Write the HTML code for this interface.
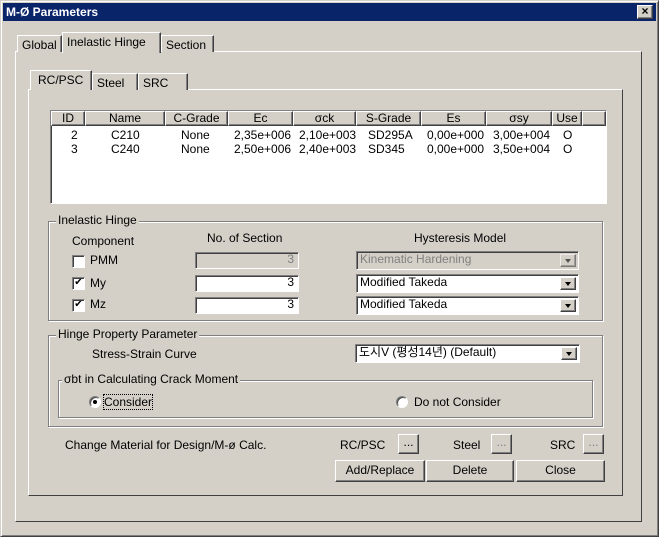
<!DOCTYPE html><html><head><meta charset="utf-8"><style>
*{box-sizing:border-box;margin:0;padding:0}
body{width:659px;height:537px;background:#d4d0c8;font:12px "Liberation Sans","Noto Sans CJK KR",sans-serif;color:#000;position:relative;overflow:hidden}
.a{position:absolute;white-space:nowrap}
.win{left:0;top:0;width:659px;height:537px;border:1px solid;border-color:#d4d0c8 #404040 #404040 #d4d0c8;box-shadow:inset 1px 1px #fff,inset -1px -1px #808080}
.title{left:3px;top:3px;width:653px;height:18px;background:#0a246a;color:#fff;font-weight:bold;font-size:12px;padding:2px 3px}
.raised{border:1px solid;border-color:#fff #404040 #404040 #fff;box-shadow:inset -1px -1px #808080}
.sunk{border:1px solid;border-color:#808080 #fff #fff #808080;box-shadow:inset 1px 1px #404040}
.tab{border:1px solid;border-color:#fff #404040 transparent #fff;border-bottom:none;box-shadow:inset -1px 0 #808080;padding:2px 4px;background:#d4d0c8}
.grp{border:1px solid #808080;box-shadow:1px 1px #fff,inset 1px 1px #fff}
.lg{background:#d4d0c8;padding:0 2px}
.th{top:0;height:15px;text-align:center;border:1px solid;border-color:#fff #404040 #404040 #fff;box-shadow:inset -1px -1px #808080;line-height:13px;background:#d4d0c8}
.cb{width:13px;height:13px;background:#fff}
.inp{background:#fff;text-align:right;padding:0 4px;line-height:13px}
.cmb{background:#fff;padding:0 3px;line-height:14px}
.arr{position:absolute;right:2px;top:2px;width:16px;height:13px;background:#d4d0c8;border:1px solid;border-color:#fff #404040 #404040 #fff;box-shadow:inset -1px -1px #808080}
.arr:after{content:"";position:absolute;left:4px;top:4px;border:3px solid transparent;border-top:4px solid #000;border-bottom:none}
.btn{text-align:center;line-height:18px;background:#d4d0c8}
</style></head><body>
<div class="a win"></div>
<div class="a title">M-Ø Parameters</div>
<div class="a raised" style="left:637px;top:5px;width:16px;height:14px;background:#d4d0c8;font-size:12px;line-height:11px;text-align:center;font-weight:bold">×</div>

<div class="a raised" style="left:15px;top:51px;width:627px;height:471px;box-shadow:none;border-color:#fff #404040 #404040 #fff"></div>
<div class="a tab" style="left:17px;top:35px;width:45px;height:17px">Global</div>
<div class="a tab" style="left:161px;top:35px;width:53px;height:17px">Section</div>
<div class="a tab" style="left:62px;top:32px;width:99px;height:21px;z-index:2">Inelastic Hinge</div>

<div class="a raised" style="left:28px;top:89px;width:595px;height:407px;box-shadow:none"></div>
<div class="a tab" style="left:92px;top:73px;width:46px;height:17px">Steel</div>
<div class="a tab" style="left:138px;top:73px;width:50px;height:17px">SRC</div>
<div class="a tab" style="left:30px;top:70px;width:62px;height:20px;z-index:2;padding:2px 7px">RC/PSC</div>

<div class="a sunk" style="left:50px;top:110px;width:557px;height:94px;background:#fff">
<div class="a th" style="left:0;width:34px">ID</div>
<div class="a th" style="left:34px;width:80px">Name</div>
<div class="a th" style="left:114px;width:63px">C-Grade</div>
<div class="a th" style="left:177px;width:65px">Ec</div>
<div class="a th" style="left:242px;width:63px">σck</div>
<div class="a th" style="left:305px;width:65px">S-Grade</div>
<div class="a th" style="left:370px;width:65px">Es</div>
<div class="a th" style="left:435px;width:66px">σsy</div>
<div class="a th" style="left:501px;width:30px">Use</div>
<div class="a th" style="left:531px;width:24px"></div>
<div class="a" style="left:0;top:17px;width:555px;line-height:14px">
<div class="a" style="left:20px">2<br>3</div>
<div class="a" style="left:60px">C210<br>C240</div>
<div class="a" style="left:130px">None<br>None</div>
<div class="a" style="left:183px">2,35e+006<br>2,50e+006</div>
<div class="a" style="left:248px">2,10e+003<br>2,40e+003</div>
<div class="a" style="left:317px">SD295A<br>SD345</div>
<div class="a" style="left:376px">0,00e+000<br>0,00e+000</div>
<div class="a" style="left:442px">3,00e+004<br>3,50e+004</div>
<div class="a" style="left:512px">O<br>O</div>
</div></div>

<div class="a grp" style="left:48px;top:221px;width:555px;height:100px"></div>
<div class="a lg" style="left:56px;top:213px">Inelastic Hinge</div>
<div class="a" style="left:72px;top:234px">Component</div>
<div class="a" style="left:207px;top:231px">No. of Section</div>
<div class="a" style="left:414px;top:231px">Hysteresis Model</div>
<div class="a sunk cb" style="left:72px;top:255px"></div><div class="a" style="left:90px;top:253px">PMM</div>
<div class="a sunk cb" style="left:72px;top:277px;font-size:10px;line-height:10px;text-align:center">✔</div><div class="a" style="left:90px;top:276px">My</div>
<div class="a sunk cb" style="left:72px;top:299px;font-size:10px;line-height:10px;text-align:center">✔</div><div class="a" style="left:90px;top:297px">Mz</div>
<div class="a sunk inp" style="left:195px;top:252px;width:104px;height:17px;background:#d4d0c8;color:#808080">3</div>
<div class="a sunk inp" style="left:195px;top:275px;width:104px;height:17px">3</div>
<div class="a sunk inp" style="left:195px;top:297px;width:104px;height:17px">3</div>
<div class="a sunk cmb" style="left:356px;top:251px;width:223px;height:19px;color:#808080;background:#d4d0c8">Kinematic Hardening<div class="arr" style="opacity:.6"></div></div>
<div class="a sunk cmb" style="left:356px;top:274px;width:223px;height:19px">Modified Takeda<div class="arr"></div></div>
<div class="a sunk cmb" style="left:356px;top:296px;width:223px;height:19px">Modified Takeda<div class="arr"></div></div>

<div class="a grp" style="left:48px;top:335px;width:555px;height:92px"></div>
<div class="a lg" style="left:56px;top:327px">Hinge Property Parameter</div>
<div class="a" style="left:92px;top:347px">Stress-Strain Curve</div>
<div class="a sunk cmb" style="left:355px;top:344px;width:225px;height:19px">도시V (평성14년) (Default)<div class="arr"></div></div>
<div class="a grp" style="left:58px;top:380px;width:535px;height:38px"></div>
<div class="a lg" style="left:62px;top:372px">σbt in Calculating Crack Moment</div>
<div class="a sunk" style="left:89px;top:396px;width:12px;height:12px;border-radius:50%;background:#fff"><div class="a" style="left:3px;top:3px;width:4px;height:4px;background:#000;border-radius:50%"></div></div>
<div class="a" style="left:104px;top:395px;outline:1px dotted #000">Consider</div>
<div class="a sunk" style="left:396px;top:396px;width:12px;height:12px;border-radius:50%;background:#fff"></div>
<div class="a" style="left:414px;top:395px">Do not Consider</div>

<div class="a" style="left:65px;top:438px">Change Material for Design/M-ø Calc.</div>
<div class="a" style="left:340px;top:438px">RC/PSC</div>
<div class="a raised btn" style="left:398px;top:434px;width:21px;height:20px;line-height:14px">...</div>
<div class="a" style="left:453px;top:438px">Steel</div>
<div class="a raised btn" style="left:491px;top:434px;width:21px;height:20px;line-height:14px;color:#808080">...</div>
<div class="a" style="left:550px;top:438px">SRC</div>
<div class="a raised btn" style="left:583px;top:434px;width:21px;height:20px;line-height:14px;color:#808080">...</div>
<div class="a raised btn" style="left:335px;top:460px;width:90px;height:22px">Add/Replace</div>
<div class="a raised btn" style="left:426px;top:460px;width:88px;height:22px">Delete</div>
<div class="a raised btn" style="left:516px;top:460px;width:89px;height:22px">Close</div>
</body></html>
